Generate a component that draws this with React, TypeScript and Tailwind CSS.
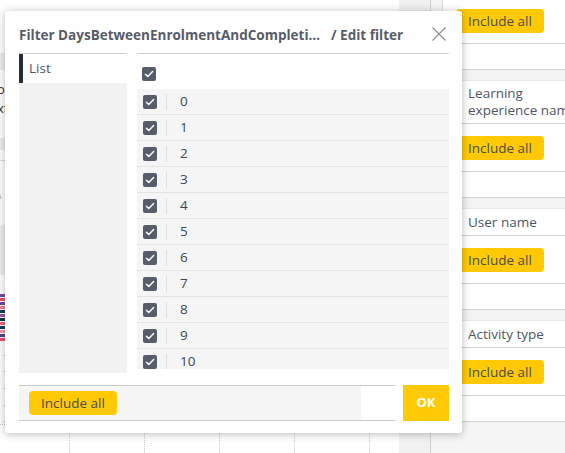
import React from "react";

const values = ["0", "1", "2", "3", "4", "5", "6", "7", "8", "9", "10"];

function Check({ className = "" }: { className?: string }) {
  return (
    <span
      className={`flex h-[14px] w-[14px] shrink-0 items-center justify-center rounded-[2px] bg-[#585d6b] ${className}`}
    >
      <svg viewBox="0 0 14 14" className="h-[14px] w-[14px]" fill="none">
        <path d="M3.4 7.3l2.4 2.3 4.8-5" stroke="#fff" strokeWidth="1.4" strokeLinecap="round" strokeLinejoin="round" />
      </svg>
    </span>
  );
}

function IncludeAll() {
  return (
    <button
      type="button"
      className="h-[24px] rounded-[4px] bg-[#ffca05] px-[12px] text-[13.5px] leading-[24px] text-[#4b4b4f]"
    >
      Include all
    </button>
  );
}

// ─── Background: filter side panel ───────────────────────────────────────────

function FilterSection({ label, twoLine = false }: { label: React.ReactNode; twoLine?: boolean }) {
  return (
    <>
      <div className="h-[11px] border-b border-[#e6e6e6] bg-[#f3f3f3]" />
      <div
        className={`flex items-center overflow-hidden whitespace-nowrap border-b border-[#d2d2d2] pl-[25px] text-[13.5px] text-[#4f5564] ${
          twoLine ? "h-[43px] leading-[17px]" : "h-[27px]"
        }`}
      >
        {label}
      </div>
      <div className="h-[48px] border-b border-[#d2d2d2] pl-[13px] pt-[11px]">
        <IncludeAll />
      </div>
      <div className="h-[26px] border-b border-[#d2d2d2]" />
    </>
  );
}

function SidePanel() {
  return (
    <div className="flex w-[135px] shrink-0 flex-col border-l border-[#d0d0d0] bg-[#f5f5f5]">
      <div className="ml-[11px] flex flex-col border-l border-[#d8d8d8] bg-white">
        <div className="h-[44px] border-b border-[#d2d2d2] pl-[13px] pt-[8px]">
          <IncludeAll />
        </div>
        <div className="h-[26px] border-b border-[#d2d2d2]" />
        <FilterSection
          twoLine
          label={
            <span>
              Learning
              <br />
              experience name
            </span>
          }
        />
        <FilterSection label="User name" />
        <FilterSection label="Activity type" />
      </div>
    </div>
  );
}

// ─── Background: report canvas (mostly hidden behind the dialog) ────────────

const stripes = ["#7a4f9a", "#e8506e", "#6b4c93", "#f07b8f", "#0d3b5c", "#8a5aa8", "#0b2f4a", "#e9677d", "#123f5f", "#f39aa6", "#5a3f86", "#e8506e"];

function ReportCanvas() {
  return (
    <div className="flex w-[399px] shrink-0 flex-col bg-white">
      <div className="h-[55px]" />
      <div className="h-[18px] bg-[#ececec]" />
      <div className="-ml-[3px] pt-[10px] text-[13px] leading-[19px] text-[#333]">
        <p>of</p>
        <p>xt</p>
      </div>
      <div className="mt-[20px] h-[12px] bg-[#ececec]" />
      <div className="mt-[10px] h-px bg-[#dcdcdc]" />
      <div className="mt-[26px] -ml-[4px] text-[16px] leading-[12px] text-[#c4c4c4]">\</div>
      <div className="mt-[26px] h-[52px] bg-[#eeeeee]" />
      <div className="mt-[19px] flex w-[6px] flex-col gap-px">
        {stripes.map((c, i) => (
          <div key={i} className="h-[3px]" style={{ background: c }} />
        ))}
      </div>
      <div className="mt-[14px] flex h-[70px] flex-col justify-between pl-[4px]">
        {[0, 1, 2, 3, 4].map((i) => (
          <div key={i} className="h-px w-px bg-[#bbb]" />
        ))}
      </div>
      <div className="mt-[2px] flex h-[30px] border-t border-dotted border-[#c8c8c8] pl-[69px]">
        {[0, 1, 2, 3, 4].map((i) => (
          <div key={i} className="w-[75px] shrink-0 border-l border-dotted border-[#c8c8c8]" />
        ))}
      </div>
    </div>
  );
}

// ─── Dialog ──────────────────────────────────────────────────────────────────

function FilterDialog() {
  return (
    <div className="absolute left-[5px] top-[11px] flex h-[422px] w-[457px] flex-col rounded-[3px] bg-white pl-[14px] pr-[13px] shadow-[0_1px_8px_rgba(0,0,0,0.28)]">
      {/* Header */}
      <div className="flex h-[42px] items-start pt-[14px] leading-[20px]">
        <span className="w-[312px] whitespace-nowrap text-[13.5px] font-bold text-[#575c68]">
          Filter DaysBetweenEnrolmentAndCompleti…
        </span>
        <span className="whitespace-nowrap text-[13.5px] font-bold text-[#575c68]">/ Edit filter</span>
        <button type="button" className="ml-auto mr-[2px] mt-[1px]">
          <svg viewBox="0 0 16 16" className="h-[16px] w-[16px]" fill="none">
            <path d="M1.5 1.5l13 13M14.5 1.5l-13 13" stroke="#8c8c8c" strokeWidth="1.1" />
          </svg>
        </button>
      </div>

      {/* Body */}
      <div className="flex h-[320px] gap-[10px]">
        <div className="flex w-[108px] flex-col border-t border-[#cfcfcf]">
          <div className="flex h-[29px] items-center border-l-[4px] border-[#262c3a] bg-white pl-[6px] text-[13.5px] text-[#4f5564]">
            List
          </div>
          <div className="flex-1 bg-[#f2f2f2]" />
        </div>
        <div className="flex w-[312px] flex-col border-t border-[#cfcfcf]">
          <div className="h-[35px] pl-[5px] pt-[13px]">
            <Check />
          </div>
          <div className="h-[280px] overflow-hidden">
            {values.map((v) => (
              <div
                key={v}
                className="flex h-[26px] items-center border-b border-[#e4e4e4] bg-[#f5f5f5] text-[13.5px] text-[#3f4555]"
              >
                <Check className="ml-[6px]" />
                <span className="ml-[9px] h-[16px] w-px bg-[#dedede]" />
                <span className="ml-[13px]">{v}</span>
              </div>
            ))}
          </div>
        </div>
      </div>

      {/* Footer */}
      <div className="mt-[12px] flex h-[36px] gap-[8px]">
        <div className="flex w-[376px] border-y border-[#c9c9c9]">
          <div className="flex w-[342px] items-center bg-[#f5f5f5] pl-[10px]">
            <IncludeAll />
          </div>
        </div>
        <button
          type="button"
          className="h-[36px] w-[46px] bg-[#ffca05] text-[13px] font-bold text-white"
        >
          OK
        </button>
      </div>
    </div>
  );
}

export default function App() {
  return (
    <div className="relative flex h-[453px] w-[565px] overflow-hidden bg-white font-['Open_Sans',sans-serif]">
      <ReportCanvas />
      <div className="w-[31px] shrink-0 bg-[#f1f1f1]" />
      <SidePanel />
      <FilterDialog />
    </div>
  );
}
